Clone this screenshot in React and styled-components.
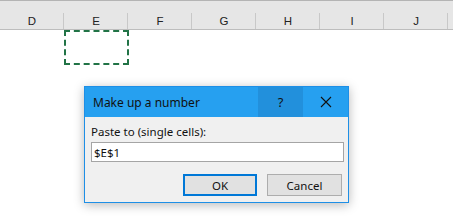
import React from 'react';
import styled, { createGlobalStyle } from 'styled-components';

const GlobalStyle = createGlobalStyle`
  html, body {
    margin: 0;
    padding: 0;
    background: #ffffff;
  }
  body {
    font-family: "Noto Sans", "Open Sans", Arial, sans-serif;
  }
`;

const columns = ['D', 'E', 'F', 'G', 'H', 'I', 'J'];

const App = () => {
  return (
    <Page>
      <GlobalStyle />
      <Sheet>
        <HeaderRow>
          {columns.map((c) => (
            <ColHeader key={c}>{c}</ColHeader>
          ))}
        </HeaderRow>
        <GridRow>
          {columns.map((c) => (
            <Cell key={c}>{c === 'E' && <Marquee />}</Cell>
          ))}
        </GridRow>
      </Sheet>

      <Dialog>
        <TitleBar>
          <Title>Make up a number</Title>
          <TitleButton $dark>?</TitleButton>
          <TitleButton>
            <svg width="12" height="12" viewBox="0 0 12 12">
              <path d="M1 1 L11 11 M11 1 L1 11" stroke="#111" strokeWidth="1.1" fill="none" />
            </svg>
          </TitleButton>
        </TitleBar>
        <Body>
          <Label>Paste to (single cells):</Label>
          <Input readOnly value="$E$1" />
          <Buttons>
            <Button $primary>OK</Button>
            <Button>Cancel</Button>
          </Buttons>
        </Body>
      </Dialog>
    </Page>
  );
};

export default App;

// Styled Components

const Page = styled.div`
  position: relative;
  width: 453px;
  height: 221px;
  overflow: hidden;
  background: #ffffff;
`;

const Sheet = styled.div`
  display: flex;
  flex-direction: column;
`;

const HeaderRow = styled.div`
  display: flex;
  height: 30px;
  padding-top: 12px;
  box-sizing: border-box;
  background: #e6e6e6;
  border-top: 1px solid #b4b4b4;
  border-bottom: 1px solid #bdbdbd;
`;

const ColHeader = styled.div`
  flex: 0 0 64px;
  box-sizing: border-box;
  border-right: 1px solid #c8c8c8;
  display: flex;
  align-items: center;
  justify-content: center;
  font-family: "Liberation Sans", Arial, sans-serif;
  font-size: 11.5px;
  color: #222;
  padding-left: 1px;
`;

const GridRow = styled.div`
  display: flex;
  height: 35px;
`;

const Cell = styled.div`
  flex: 0 0 64px;
  position: relative;
`;

const Marquee = styled.div`
  position: absolute;
  left: 0;
  top: 0;
  width: 65px;
  height: 35px;
  box-sizing: border-box;
  border: 2px dashed #217346;
`;

const Dialog = styled.div`
  position: absolute;
  left: 84px;
  top: 86px;
  width: 265px;
  height: 117px;
  box-sizing: border-box;
  border: 1px solid #1e8fe6;
  background: #f0f0f0;
  box-shadow: 0 2px 10px rgba(0, 0, 0, 0.28);
  display: flex;
  flex-direction: column;
`;

const TitleBar = styled.div`
  display: flex;
  align-items: stretch;
  height: 30px;
  background: #26a0f0;
`;

const Title = styled.div`
  flex: 1;
  display: flex;
  align-items: center;
  padding-left: 8px;
  font-size: 12px;
  color: #111;
`;

const TitleButton = styled.div`
  width: 45px;
  display: flex;
  align-items: center;
  justify-content: center;
  background: ${(p) => (p.$dark ? '#2290dc' : 'transparent')};
  font-size: 13px;
  color: #111;
`;

const Body = styled.div`
  display: flex;
  flex-direction: column;
  padding: 7px 5px 0 6px;
`;

const Label = styled.div`
  font-size: 11.5px;
  color: #111;
  line-height: 15px;
`;

const Input = styled.input`
  margin-top: 3px;
  height: 20px;
  width: 253px;
  box-sizing: border-box;
  border: 1px solid #a5a5a5;
  background: #fff;
  padding: 0 0 0 2px;
  font-family: "Noto Sans", sans-serif;
  font-size: 11.5px;
  color: #111;
  outline: none;
`;

const Buttons = styled.div`
  display: flex;
  justify-content: flex-end;
  gap: 10px;
  margin-top: 12px;
  padding-right: 1px;
`;

const Button = styled.div`
  width: ${(p) => (p.$primary ? '74px' : '75px')};
  height: 22px;
  box-sizing: border-box;
  border: ${(p) => (p.$primary ? '2px solid #0078d7' : '1px solid #adadad')};
  background: #e1e1e1;
  display: flex;
  align-items: center;
  justify-content: center;
  font-size: 11.5px;
  color: #111;
`;
